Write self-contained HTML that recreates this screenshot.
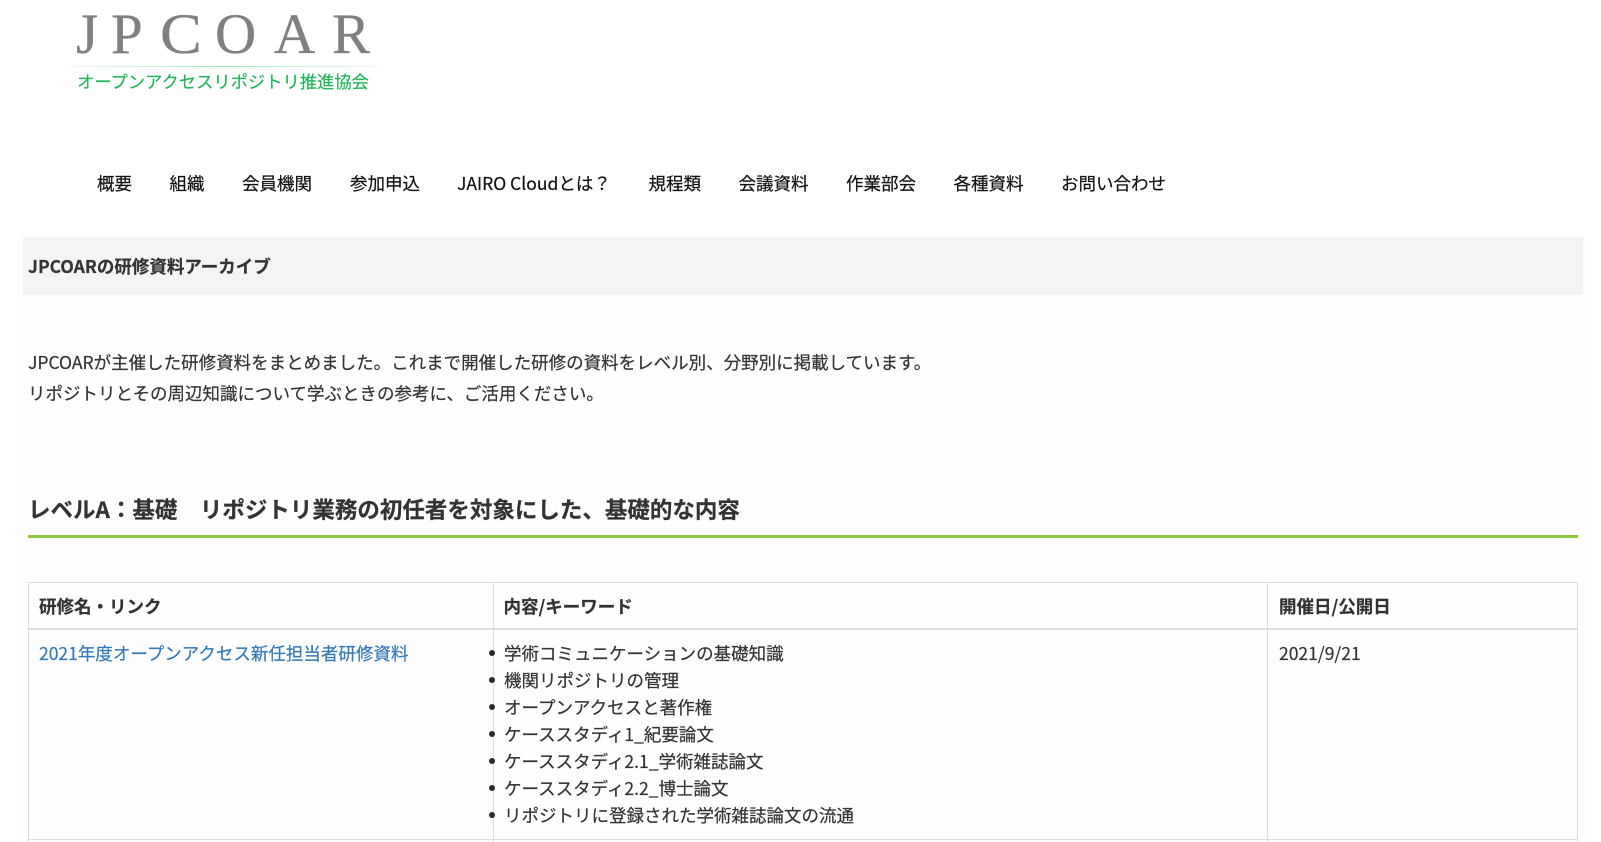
<!DOCTYPE html>
<html lang="ja"><head><meta charset="utf-8"><title>JPCOAR</title>
<style>
html,body{margin:0;padding:0;background:#fff;width:1601px;height:842px;overflow:hidden}
body{position:relative;font-family:"Noto Sans CJK JP","Liberation Sans",sans-serif;color:#333;font-size:17.5px}
.a{position:absolute;white-space:nowrap}
.r{-webkit-text-stroke:.2px currentColor}
.logo{font-family:"Liberation Serif",serif;font-size:57px;color:#808080;top:0;line-height:70px;-webkit-text-stroke:.3px #808080}
.sub{left:77px;top:68px;font-size:17.3px;line-height:26px;color:#1fb45a;-webkit-text-stroke:.15px #1fb45a}
.ln{left:50px;top:66px;width:345px;height:1px;background:linear-gradient(90deg,#fff,#9fe6ba 50%,#fff)}
.nav{top:170px;line-height:27px;color:#111;-webkit-text-stroke:.2px #111}
.wrap{left:22px;top:237px;width:1562px;height:605px;background:#fefefe;box-shadow:0 0 0 1px #fcfcfc}
.bar{left:23px;top:237px;width:1560px;height:58px;background:#f4f4f4}
.h{font-weight:700;color:#333;-webkit-text-stroke:.2px #333}
.t{line-height:31px}
.g{left:28px;top:535px;width:1550px;height:3px;background:#8cc63f}
.v{background:#ddd;width:1px}
.hl{background:#ddd;height:1px}
.li{left:504px;line-height:27px}
.d{left:489px;width:6px;height:6px;border-radius:50%;background:#2b2b2b}
</style></head><body>
<div class="a wrap"></div>
<div class="a logo" style="left:76px">J</div>
<div class="a logo" style="left:111px">P</div>
<div class="a logo" style="left:160px;transform:scaleX(1.1);transform-origin:left">C</div>
<div class="a logo" style="left:215px">O</div>
<div class="a logo" style="left:274px">A</div>
<div class="a logo" style="left:332px">R</div>
<div class="a ln"></div>
<div class="a sub">オープンアクセスリポジトリ推進協会</div>

<div class="a nav" style="left:97px">概要</div>
<div class="a nav" style="left:169.5px">組織</div>
<div class="a nav" style="left:242px">会員機関</div>
<div class="a nav" style="left:350px">参加申込</div>
<div class="a nav" style="left:457px">JAIRO Cloudとは？</div>
<div class="a nav" style="left:648.5px">規程類</div>
<div class="a nav" style="left:738.5px">会議資料</div>
<div class="a nav" style="left:846px">作業部会</div>
<div class="a nav" style="left:953.5px">各種資料</div>
<div class="a nav" style="left:1061px">お問い合わせ</div>

<div class="a bar"></div>
<div class="a h" style="left:28px;top:253px;line-height:28px">JPCOARの研修資料アーカイブ</div>
<div class="a t r" style="left:28px;top:347px">JPCOARが主催した研修資料をまとめました。これまで開催した研修の資料をレベル別、分野別に掲載しています。</div>
<div class="a t r" style="left:28px;top:378px">リポジトリとその周辺知識について学ぶときの参考に、ご活用ください。</div>
<div class="a h" style="left:28px;top:491px;font-size:22.5px;line-height:36px">レベルA：基礎　リポジトリ業務の初任者を対象にした、基礎的な内容</div>
<div class="a g"></div>

<div class="a hl" style="left:28px;top:582px;width:1550px"></div>
<div class="a" style="left:28px;top:628px;width:1550px;height:2px;background:#ddd"></div>
<div class="a hl" style="left:28px;top:839px;width:1550px"></div>
<div class="a v" style="left:28px;top:582px;height:260px"></div>
<div class="a v" style="left:493px;top:582px;height:260px"></div>
<div class="a v" style="left:1267px;top:582px;height:260px"></div>
<div class="a v" style="left:1577px;top:582px;height:260px"></div>

<div class="a h" style="left:39px;top:593px;line-height:27px">研修名・リンク</div>
<div class="a h" style="left:503.5px;top:593px;line-height:27px">内容/キーワード</div>
<div class="a h" style="left:1279px;top:593px;line-height:27px">開催日/公開日</div>

<div class="a r" style="left:39px;top:640px;line-height:27px;color:#337ab7">2021年度オープンアクセス新任担当者研修資料</div>
<div class="a r" style="left:1279px;top:640px;line-height:27px">2021/9/21</div>

<div class="a d" style="top:650px"></div><div class="a li r" style="top:640px">学術コミュニケーションの基礎知識</div>
<div class="a d" style="top:677px"></div><div class="a li r" style="top:667px">機関リポジトリの管理</div>
<div class="a d" style="top:704px"></div><div class="a li r" style="top:694px">オープンアクセスと著作権</div>
<div class="a d" style="top:731px"></div><div class="a li r" style="top:721px">ケーススタディ1_紀要論文</div>
<div class="a d" style="top:758px"></div><div class="a li r" style="top:748px">ケーススタディ2.1_学術雑誌論文</div>
<div class="a d" style="top:785px"></div><div class="a li r" style="top:775px">ケーススタディ2.2_博士論文</div>
<div class="a d" style="top:812px"></div><div class="a li r" style="top:802px">リポジトリに登録された学術雑誌論文の流通</div>
</body></html>
